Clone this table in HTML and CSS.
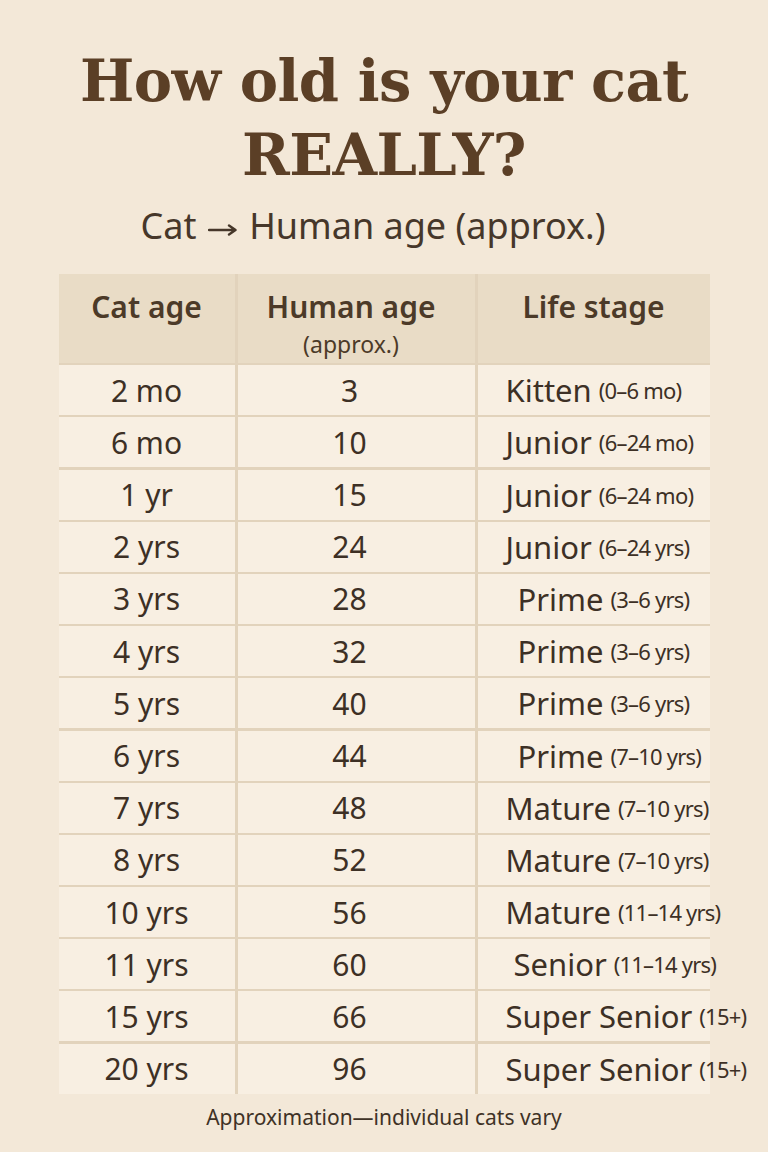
FILE: index.html
```html
<!DOCTYPE html>
<html lang="en">
<head>
<meta charset="utf-8">
<title>How old is your cat REALLY?</title>
<link rel="stylesheet" href="styles.css">
</head>
<body>
<main class="page">
  <h1 class="title">How old is your cat<br>REALLY?</h1>
  <p class="subtitle">Cat <svg class="arrow" viewBox="0 0 30 14" width="30" height="14" aria-label="→"><path d="M1 7H27M21 2.5L27.5 7L21 11.5" fill="none" stroke="currentColor" stroke-width="2.4" stroke-linecap="round" stroke-linejoin="round"/></svg> Human age (approx.)</p>
  <div class="table">
    <div class="th"><span class="th-main">Cat age</span></div>
    <div class="th th-human"><span class="th-main">Human age</span><span class="th-sub">(approx.)</span></div>
    <div class="th"><span class="th-main">Life stage</span></div>

    <div class="td">2 mo</div><div class="td human">3</div><div class="td stage">Kitten <small>(0–6 mo)</small></div>
    <div class="td">6 mo</div><div class="td human">10</div><div class="td stage">Junior <small>(6–24 mo)</small></div>
    <div class="td">1 yr</div><div class="td human">15</div><div class="td stage">Junior <small>(6–24 mo)</small></div>
    <div class="td">2 yrs</div><div class="td human">24</div><div class="td stage">Junior <small>(6–24 yrs)</small></div>
    <div class="td">3 yrs</div><div class="td human">28</div><div class="td stage prime">Prime <small>(3–6 yrs)</small></div>
    <div class="td">4 yrs</div><div class="td human">32</div><div class="td stage prime">Prime <small>(3–6 yrs)</small></div>
    <div class="td">5 yrs</div><div class="td human">40</div><div class="td stage prime">Prime <small>(3–6 yrs)</small></div>
    <div class="td">6 yrs</div><div class="td human">44</div><div class="td stage prime">Prime <small>(7–10 yrs)</small></div>
    <div class="td">7 yrs</div><div class="td human">48</div><div class="td stage">Mature <small>(7–10 yrs)</small></div>
    <div class="td">8 yrs</div><div class="td human">52</div><div class="td stage">Mature <small>(7–10 yrs)</small></div>
    <div class="td">10 yrs</div><div class="td human">56</div><div class="td stage">Mature <small>(11–14 yrs)</small></div>
    <div class="td">11 yrs</div><div class="td human">60</div><div class="td stage senior">Senior <small>(11–14 yrs)</small></div>
    <div class="td">15 yrs</div><div class="td human">66</div><div class="td stage">Super Senior <small>(15+)</small></div>
    <div class="td">20 yrs</div><div class="td human">96</div><div class="td stage">Super Senior <small>(15+)</small></div>
  </div>
  <p class="note">Approximation—individual cats vary</p>
</main>
</body>
</html>
```
FILE: styles.css
```css
html, body {
  margin: 0;
  padding: 0;
  background: #f3e8d8;
}
.page {
  width: 768px;
  height: 1152px;
  display: flex;
  flex-direction: column;
  align-items: center;
  font-family: "Noto Sans", "Open Sans", sans-serif;
  color: #3d3025;
  overflow: hidden;
}
.title {
  margin: 44px 0 0;
  font-family: "DejaVu Serif", "Liberation Serif", serif;
  font-weight: bold;
  font-size: 57.5px;
  line-height: 74px;
  letter-spacing: -0.6px;
  text-align: center;
  color: #5b3f26;
}
.subtitle {
  margin: 0;
  height: 56px;
  padding: 12px 22px 0 0;
  box-sizing: border-box;
  font-size: 36px;
  line-height: 44px;
  color: #46372a;
}
.arrow {
  vertical-align: 2px;
  margin: 0 2px;
}
.table {
  margin-top: 26px;
  display: grid;
  grid-template-columns: 176px 237px 232px;
  grid-template-rows: 89px repeat(14, 50px);
  column-gap: 3px;
  row-gap: 2.2px;
  background: #e2d3bc;
  width: 651px;
}
.th {
  background: #e9dcc6;
  display: flex;
  flex-direction: column;
  align-items: center;
  padding-top: 13px;
  color: #4c3a28;
}
.th-main {
  font-size: 30px;
  font-weight: 600;
  line-height: 40px;
}
.th-human {
  padding-right: 10px;
}
.th-sub {
  margin-top: 2px;
  font-size: 23px;
  font-weight: 400;
  line-height: 30px;
}
.td {
  background: #f8efe2;
  display: flex;
  justify-content: center;
  align-items: center;
  font-size: 30px;
  white-space: nowrap;
}
.td.human {
  padding-right: 13px;
}
.td.stage {
  justify-content: flex-start;
  padding-left: 28px;
  font-size: 31px;
}
.td.stage.prime {
  padding-left: 40px;
}
.td.stage.senior {
  padding-left: 36px;
}
.td small {
  font-size: 22px;
  margin-left: 7px;
  letter-spacing: -0.8px;
}
.note {
  margin: 8px 0 0;
  font-size: 21px;
  line-height: 30px;
  color: #3f3226;
}
```
